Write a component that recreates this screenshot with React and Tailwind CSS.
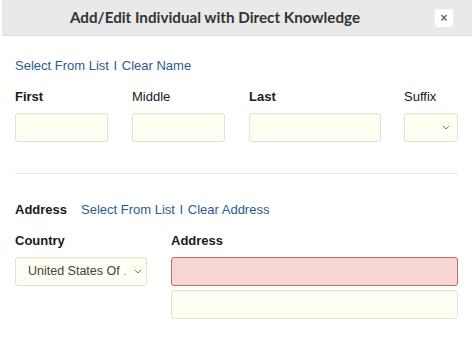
import React from 'react';

const Field = ({ label, bold, width, children }) => (
    <div className={`flex flex-col gap-[9px] ${width}`}>
        <span className={`text-[13px] leading-[15px] text-[#1a1a1a] ${bold ? 'font-bold' : ''}`}>{label}</span>
        {children}
    </div>
);

const inputCls = 'h-[29px] w-full rounded-[3px] border border-[#e2e2dc] bg-[#fefef1] shadow-[inset_0_1px_1px_rgba(0,0,0,0.03)]';

const Chevron = () => (
    <svg width="8" height="5" viewBox="0 0 8 5" className="text-[#777] shrink-0">
        <path d="M0.8 0.8 L4 4 L7.2 0.8" fill="none" stroke="currentColor" strokeWidth="1" />
    </svg>
);

const App = () => {
    return (
        <div className="w-[474px] h-[346px] bg-white font-['Liberation_Sans',Arial,sans-serif]">
            {/* Header */}
            <div className="mx-[2px] h-[36px] flex items-center bg-[#e9e9e9] border-b border-[#dcdcdc] rounded-b-[2px]">
                <h1 className="flex-1 text-center font-['Lato',sans-serif] font-bold text-[15.2px] text-[#333]">
                    Add/Edit Individual with Direct Knowledge
                </h1>
                <div className="w-[44px] flex items-center">
                    <button className="ml-[7px] w-[18px] h-[18px] bg-white rounded-[2px] flex items-center justify-center text-[#666] text-[12px] leading-none font-bold">
                        ×
                    </button>
                </div>
            </div>

            <div className="px-[15px]">
                {/* Name links */}
                <div className="mt-[22px] text-[13px] leading-[15px] text-[#2b5c91]">
                    Select From List <span className="mx-[1px]">I</span> Clear Name
                </div>

                {/* Name row */}
                <div className="mt-[16px] flex gap-[24px]">
                    <Field label="First" bold width="w-[93px]">
                        <div className={inputCls} />
                    </Field>
                    <Field label="Middle" width="w-[93px]">
                        <div className={inputCls} />
                    </Field>
                    <Field label="Last" bold width="w-[132px]">
                        <div className={inputCls} />
                    </Field>
                    <Field label="Suffix" width="w-[54px] ml-[-1px]">
                        <div className={`${inputCls} flex items-center justify-end pr-[7px]`}>
                            <Chevron />
                        </div>
                    </Field>
                </div>

                <div className="mt-[31px] h-px bg-[#e8e8e8] w-[443px]" />

                {/* Address links */}
                <div className="mt-[28px] flex items-center text-[13px] leading-[15px]">
                    <span className="font-bold text-[#1a1a1a] w-[66px]">Address</span>
                    <span className="text-[#2b5c91]">
                        Select From List <span className="mx-[1px]">I</span> Clear Address
                    </span>
                </div>

                {/* Address row */}
                <div className="mt-[16px] flex gap-[24px]">
                    <Field label="Country" bold width="w-[132px]">
                        <div className={`${inputCls} flex items-center justify-between pl-[12px] pr-[4px] overflow-hidden`}>
                            <span className="text-[12.5px] text-[#444] whitespace-nowrap">United States Of <span className="text-[#999]">.</span></span>
                            <Chevron />
                        </div>
                    </Field>
                    <div className="flex flex-col w-[287px]">
                        <span className="text-[13px] leading-[15px] font-bold text-[#1a1a1a]">Address</span>
                        <div className="mt-[9px] h-[29px] rounded-[3px] border border-[#c26a6a] bg-[#f7d6d6]" />
                        <div className={`mt-[4px] ${inputCls}`} />
                    </div>
                </div>
            </div>
        </div>
    );
};

export default App;
